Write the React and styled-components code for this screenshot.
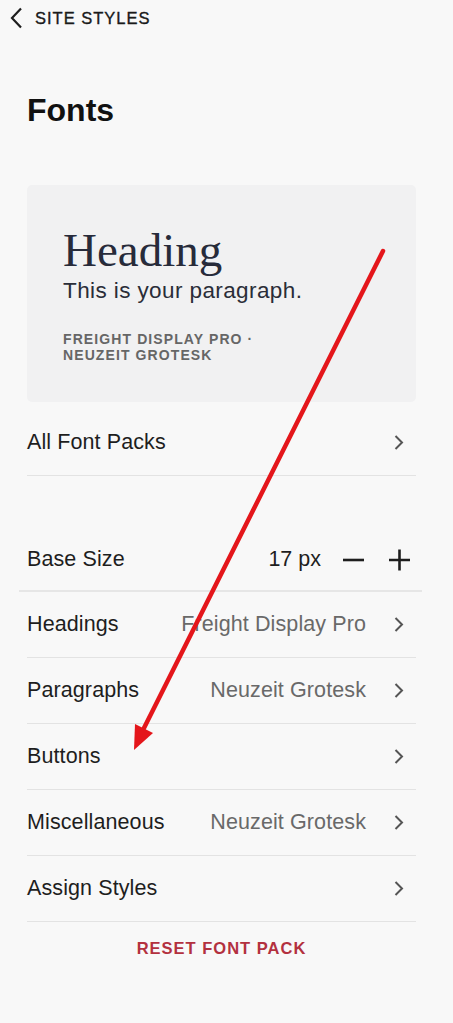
import styled, { createGlobalStyle } from "styled-components";

const GlobalStyle = createGlobalStyle`
  body {
    margin: 0;
    background: #f8f8f8;
    font-family: "Liberation Sans", Arial, sans-serif;
    color: #1e1e1e;
  }
`;

const rows = [
  { label: "Headings", value: "Freight Display Pro" },
  { label: "Paragraphs", value: "Neuzeit Grotesk" },
  { label: "Buttons", value: "" },
  { label: "Miscellaneous", value: "Neuzeit Grotesk" },
  { label: "Assign Styles", value: "" },
];

function Chevron({ left }) {
  return (
    <svg width="14" height={left ? 22 : 15} viewBox={left ? "0 0 14 22" : "0 0 14 15"}>
      {left ? (
        <path d="M12 1.5 L3 11 L12 20.5" fill="none" stroke="#1e1e1e" strokeWidth="2.2" />
      ) : (
        <path d="M3.5 1 L10 7.5 L3.5 14" fill="none" stroke="#555" strokeWidth="2" />
      )}
    </svg>
  );
}

export default function App() {
  return (
    <Page>
      <GlobalStyle />
      <TopBar>
        <Chevron left />
        <TopTitle>SITE STYLES</TopTitle>
      </TopBar>

      <Panel>
        <Title>Fonts</Title>

        <Preview>
          <PreviewHeading>Heading</PreviewHeading>
          <PreviewText>This is your paragraph.</PreviewText>
          <PreviewCaption>
            FREIGHT DISPLAY PRO ·<br />
            NEUZEIT GROTESK
          </PreviewCaption>
        </Preview>

        <Row $first>
          <Label>All Font Packs</Label>
          <Value />
          <Chevron />
        </Row>

        <SizeRow>
          <Label>Base Size</Label>
          <SizeControls>
            <SizeValue>17 px</SizeValue>
            <svg width="22" height="22" viewBox="0 0 22 22">
              <path d="M0 11 H21" stroke="#1e1e1e" strokeWidth="2.6" />
            </svg>
            <svg width="22" height="22" viewBox="0 0 22 22">
              <path d="M0 11 H21 M10.5 0.5 V21.5" stroke="#1e1e1e" strokeWidth="2.6" />
            </svg>
          </SizeControls>
        </SizeRow>

        {rows.map((r) => (
          <Row key={r.label}>
            <Label>{r.label}</Label>
            <Value>{r.value}</Value>
            <Chevron />
          </Row>
        ))}

        <Reset>RESET FONT PACK</Reset>
      </Panel>

      <Pointer width="453" height="1023" viewBox="0 0 453 1023">
        <line x1="383" y1="251" x2="142" y2="732" stroke="#e4161b" strokeWidth="4.5" strokeLinecap="round" />
        <polygon points="134,750 135,724 153,733" fill="#e4161b" />
      </Pointer>
    </Page>
  );
}

const Page = styled.div`
  position: relative;
  min-height: 1023px;
  overflow: hidden;
`;

const TopBar = styled.div`
  display: flex;
  align-items: center;
  gap: 12px;
  height: 36px;
  padding: 0 0 0 9px;
`;

const TopTitle = styled.span`
  font-size: 16.5px;
  letter-spacing: 1px;
  color: #1a1a1a;
  -webkit-text-stroke: 0.35px #1a1a1a;
`;

const Panel = styled.div`
  padding: 0 37px 0 27px;
`;

const Title = styled.h1`
  margin: 54px 0 0;
  font-size: 32px;
  line-height: 40px;
  font-weight: bold;
  color: #111;
`;

const Preview = styled.div`
  margin-top: 55px;
  height: 217px;
  box-sizing: border-box;
  padding: 38px 36px 0;
  background: #f1f1f2;
  border-radius: 5px;
`;

const PreviewHeading = styled.div`
  font-family: "Liberation Serif", "Times New Roman", serif;
  font-size: 47px;
  line-height: 54px;
  color: #272b3a;
`;

const PreviewText = styled.div`
  font-size: 22.5px;
  line-height: 28px;
  letter-spacing: 0.4px;
  color: #2a2d38;
`;

const PreviewCaption = styled.div`
  margin-top: 26px;
  font-size: 14px;
  line-height: 16px;
  font-weight: bold;
  letter-spacing: 1.1px;
  color: #666;
`;

const Row = styled.div`
  display: flex;
  align-items: center;
  height: 65px;
  margin-top: ${(p) => (p.$first ? "8px" : "0")};
  border-bottom: 1px solid #e3e3e3;
  padding-right: 10px;

  & > svg {
    margin-left: 26px;
    flex-shrink: 0;
  }
`;

const SizeRow = styled.div`
  display: flex;
  align-items: center;
  justify-content: space-between;
  height: 66px;
  margin: 50px -6px 0 -8px;
  padding: 3px 11px 0 8px;
  box-sizing: border-box;
  border-bottom: 2px solid #e6e6e6;
`;

const Label = styled.span`
  font-size: 21.5px;
  letter-spacing: 0.1px;
  color: #1e1e1e;
  white-space: nowrap;
`;

const Value = styled.span`
  flex: 1;
  text-align: right;
  font-size: 21.5px;
  letter-spacing: 0.1px;
  color: #696969;
  white-space: nowrap;
`;

const SizeControls = styled.div`
  display: flex;
  align-items: center;
  gap: 24px;
`;

const SizeValue = styled.span`
  font-size: 21.5px;
  color: #1e1e1e;
  margin-right: -2px;
`;

const Reset = styled.div`
  padding-top: 17px;
  text-align: center;
  font-size: 16.5px;
  font-weight: bold;
  letter-spacing: 1px;
  color: #b3313f;
`;

const Pointer = styled.svg`
  position: absolute;
  top: 0;
  left: 0;
  pointer-events: none;
`;
